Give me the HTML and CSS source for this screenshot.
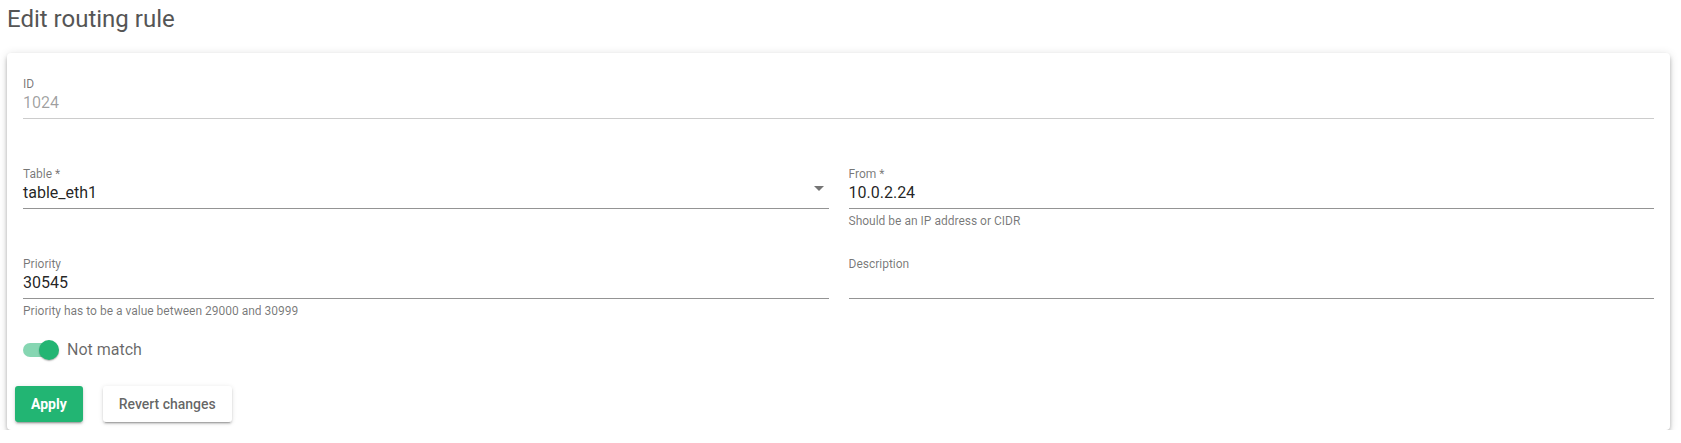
FILE: index.html
```html
<!DOCTYPE html>
<html lang="en">
<head>
<meta charset="utf-8">
<title>Edit routing rule</title>
<link rel="stylesheet" href="styles.css">
</head>
<body>
<div class="page">
  <h1 class="title">Edit routing rule</h1>
  <div class="card">
    <div class="fields">
      <div class="field field--full field--disabled">
        <div class="label">ID</div>
        <div class="input"><span class="value">1024</span></div>
        <div class="messages"></div>
      </div>
      <div class="field">
        <div class="label">Table *</div>
        <div class="input">
          <span class="value">table_eth1</span>
          <svg class="arrow" width="10" height="5" viewBox="7 10 10 5"><path d="M7 10l5 5 5-5z" fill="rgba(0,0,0,0.54)"/></svg>
        </div>
        <div class="messages"></div>
      </div>
      <div class="field">
        <div class="label">From *</div>
        <div class="input"><span class="value">10.0.2.24</span></div>
        <div class="messages">Should be an IP address or CIDR</div>
      </div>
      <div class="field">
        <div class="label">Priority</div>
        <div class="input"><span class="value">30545</span></div>
        <div class="messages">Priority has to be a value between 29000 and 30999</div>
      </div>
      <div class="field">
        <div class="label">Description</div>
        <div class="input"><span class="value"></span></div>
        <div class="messages"></div>
      </div>
    </div>
    <div class="switch-row">
      <span class="switch"><span class="track"></span><span class="thumb"></span></span>
      <span class="switch-label">Not match</span>
    </div>
    <div class="actions">
      <button class="btn btn--primary">Apply</button>
      <button class="btn btn--default">Revert changes</button>
    </div>
  </div>
</div>
</body>
</html>
```
FILE: styles.css
```css
* { box-sizing: border-box; }
html, body { margin: 0; padding: 0; background: #ffffff; }
body { font-family: Roboto, "Liberation Sans", Arial, sans-serif; }

.page { padding: 3px 11px 0 7px; }

.title {
  margin: 0 0 18px 0;
  font-size: 24px;
  line-height: 32px;
  font-weight: 400;
  color: #555555;
}

.card {
  background: #ffffff;
  border-radius: 4px;
  padding: 23px 16px 8px 16px;
  box-shadow: 0 2px 4px -1px rgba(0,0,0,0.2), 0 4px 5px 0 rgba(0,0,0,0.14), 0 1px 10px 0 rgba(0,0,0,0.12);
}

.fields {
  display: grid;
  grid-template-columns: 1fr 1fr;
  column-gap: 20px;
  row-gap: 28px;
}

.field--full { grid-column: 1 / span 2; }

.label {
  font-size: 12px;
  line-height: 16px;
  color: rgba(0,0,0,0.54);
}

.input {
  display: flex;
  align-items: flex-start;
  height: 27px;
  padding: 1px 0 5px 0;
  border-bottom: 1px solid rgba(0,0,0,0.42);
}

.value {
  flex: 1;
  font-size: 16px;
  line-height: 20px;
  color: rgba(0,0,0,0.87);
}

.field--disabled .input { border-bottom-color: rgba(0,0,0,0.2); }
.field--disabled .value { color: rgba(0,0,0,0.38); }

.arrow { margin: 3px 5px 0 0; flex: none; }

.messages {
  min-height: 19px;
  padding-top: 5px;
  font-size: 12px;
  line-height: 14px;
  color: rgba(0,0,0,0.54);
}

.switch-row {
  display: flex;
  align-items: center;
  height: 24px;
  margin-top: 20px;
}

.switch {
  position: relative;
  display: block;
  width: 36px;
  height: 20px;
  margin-right: 8px;
}

.track {
  position: absolute;
  left: 0;
  top: 3px;
  width: 34px;
  height: 14px;
  border-radius: 8px;
  background: rgba(34,181,115,0.55);
}

.thumb {
  position: absolute;
  right: 0;
  top: 0;
  width: 20px;
  height: 20px;
  border-radius: 50%;
  background: #22b573;
  box-shadow: 0 1px 2px rgba(0,0,0,0.2), 0 1px 1px rgba(0,0,0,0.14);
}

.switch-label {
  font-size: 16px;
  line-height: 20px;
  color: rgba(0,0,0,0.6);
}

.actions {
  display: flex;
  gap: 20px;
  margin: 24px 0 0 -8px;
}

.btn {
  height: 36px;
  padding: 0 16px;
  border: none;
  border-radius: 3px;
  font-family: Roboto, "Liberation Sans", Arial, sans-serif;
  font-size: 14px;
  cursor: pointer;
  box-shadow: 0 3px 1px -2px rgba(0,0,0,0.2), 0 2px 2px 0 rgba(0,0,0,0.14), 0 1px 5px 0 rgba(0,0,0,0.12);
}

.btn--primary {
  background: #22b573;
  color: #ffffff;
  font-weight: 700;
}

.btn--default {
  background: #ffffff;
  color: rgba(0,0,0,0.62);
  font-weight: 500;
}
```
